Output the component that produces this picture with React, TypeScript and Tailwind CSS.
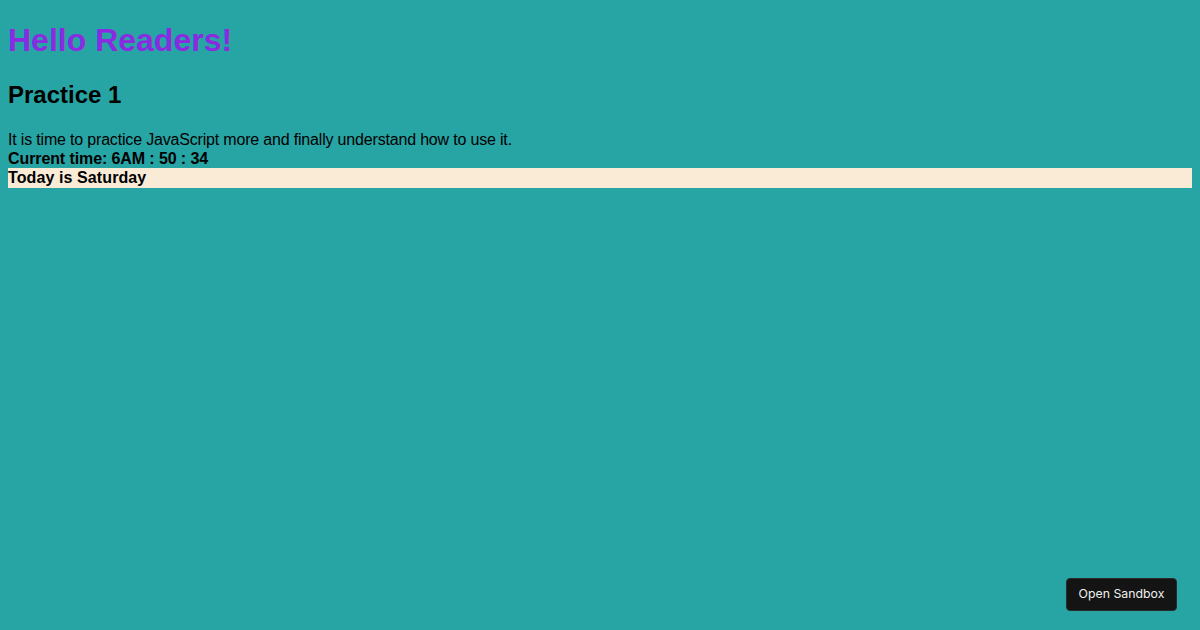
export default function App() {
  return (
    <div className="min-h-[630px] bg-[#27a4a4] px-2 pt-[21.44px] font-['Liberation_Sans',Arial,sans-serif] text-base leading-[1.2] text-black">
      <h1 className="text-[32px] font-bold leading-[1.2] text-[#8a2be2]">Hello Readers!</h1>
      <h2 className="mt-[21.44px] text-[24px] font-bold leading-[1.2]">Practice 1</h2>
      <p className="mt-[19.92px] tracking-[-0.18px]">
        It is time to practice JavaScript more and finally understand how to use it.
      </p>
      <div className="font-bold tracking-[-0.1px]">Current time: 6AM : 50 : 34</div>
      <div className="bg-[#faebd7] font-bold tracking-[0.1px]">Today is Saturday</div>

      <button className="fixed right-[23px] bottom-[19px] h-[33px] w-[111px] rounded-[4px] border border-[#2a2a2a] bg-[#141414] font-['Inter',sans-serif] text-[12.3px] text-[#f0f0f0]">
        Open Sandbox
      </button>
    </div>
  );
}
